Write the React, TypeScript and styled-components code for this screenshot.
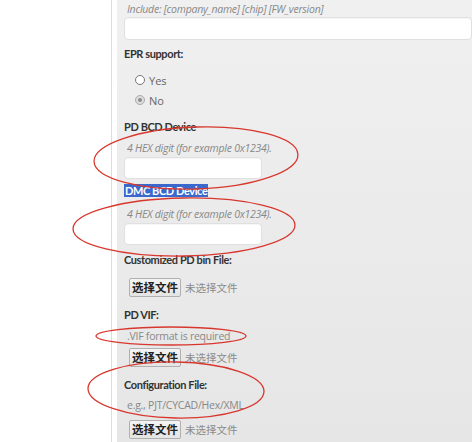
import styled, { createGlobalStyle } from "styled-components";

const Global = createGlobalStyle`
  html, body {
    margin: 0;
    padding: 0;
    background: #ffffff;
  }
  body {
    font-family: "Open Sans", "Noto Sans CJK SC", sans-serif;
    color: #333;
  }
`;

const Page = styled.div`
  position: relative;
  width: 474px;
  height: 442px;
  overflow: hidden;
  display: flex;
`;

const Blank = styled.div`
  width: 112px;
  border-right: 1px solid #dcdcdc;
`;

const Panel = styled.div`
  flex: 1;
  margin-left: 5px;
  margin-right: 2px;
  padding-left: 7px;
  background: linear-gradient(#f0f0f0, #e6e6e6);
  display: flex;
  flex-direction: column;
  align-items: flex-start;
`;

interface SpaceProps {
  $mt: number;
}

const Label = styled.div<SpaceProps>`
  margin-top: ${(p) => p.$mt}px;
  font-family: Lato, "Open Sans", sans-serif;
  font-size: 11px;
  line-height: 14px;
  font-weight: 700;
  color: #333;
  letter-spacing: -0.4px;
`;

const Selected = styled.span`
  background: #3a68cc;
  color: #fff;
  padding: 0 1px;
`;

const Hint = styled.div<SpaceProps & { $italic?: boolean }>`
  margin-top: ${(p) => p.$mt}px;
  padding-left: 3px;
  font-size: 10.5px;
  line-height: 14px;
  color: #888;
  font-style: ${(p) => (p.$italic ? "italic" : "normal")};
  letter-spacing: -0.25px;
`;

const TextInput = styled.input<SpaceProps & { $w: number; $h: number }>`
  margin-top: ${(p) => p.$mt}px;
  width: ${(p) => p.$w}px;
  height: ${(p) => p.$h}px;
  box-sizing: border-box;
  background: #fff;
  border: 1px solid #e0e0e0;
  border-radius: 4px;
  box-shadow: inset 0 1px 1px rgba(0, 0, 0, 0.04);
  outline: none;
`;

const Radios = styled.div`
  margin-top: 11px;
  padding-left: 11px;
  display: flex;
  flex-direction: column;
  gap: 4px;
`;

const RadioRow = styled.label`
  display: flex;
  align-items: center;
  gap: 4px;
  height: 16px;
  font-size: 11px;
  color: #666;
`;

const RadioDot = styled.span<{ $checked?: boolean }>`
  width: 8px;
  height: 8px;
  border-radius: 50%;
  border: 1px solid ${(p) => (p.$checked ? "#aaa" : "#777")};
  background: ${(p) => (p.$checked ? "#dedede" : "#fff")};
  display: flex;
  align-items: center;
  justify-content: center;
  &::after {
    content: "";
    display: ${(p) => (p.$checked ? "block" : "none")};
    width: 4px;
    height: 4px;
    border-radius: 50%;
    background: #8c8c8c;
  }
`;

const FileRow = styled.div<SpaceProps>`
  margin-top: ${(p) => p.$mt}px;
  padding-left: 5px;
  display: flex;
  align-items: center;
  gap: 4px;
`;

const FileButton = styled.button`
  height: 19px;
  width: 52px;
  padding: 0;
  box-sizing: border-box;
  background: linear-gradient(#f4f4f4, #e4e4e4);
  border: 1px solid #b0b0b0;
  border-radius: 2px;
  font-family: "Noto Sans CJK SC", sans-serif;
  font-size: 11.5px;
  font-weight: 700;
  color: #222;
  line-height: 17px;
`;

const NoFile = styled.span`
  font-family: "Noto Sans CJK SC", sans-serif;
  font-size: 10.5px;
  color: #8a8a8a;
`;

const Marks = styled.svg`
  position: absolute;
  left: 0;
  top: 0;
  pointer-events: none;
`;

function FilePicker({ mt }: { mt: number }) {
  return (
    <FileRow $mt={mt}>
      <FileButton>选择文件</FileButton>
      <NoFile>未选择文件</NoFile>
    </FileRow>
  );
}

export default function App() {
  return (
    <>
      <Global />
      <Page>
        <Blank />
        <Panel>
          <Hint $mt={2} $italic>
            Include: [company_name] [chip] [FW_version]
          </Hint>
          <TextInput $mt={1} $w={348} $h={23} />

          <Label $mt={7}>EPR support:</Label>
          <Radios>
            <RadioRow>
              <RadioDot />
              Yes
            </RadioRow>
            <RadioRow>
              <RadioDot $checked />
              No
            </RadioRow>
          </Radios>

          <Label $mt={12}>PD BCD Device</Label>
          <Hint $mt={7} $italic>
            4 HEX digit (for example 0x1234).
          </Hint>
          <TextInput $mt={2} $w={138} $h={22} />

          <Label $mt={5}>
            <Selected>DMC BCD Device</Selected>
          </Label>
          <Hint $mt={9} $italic>
            4 HEX digit (for example 0x1234).
          </Hint>
          <TextInput $mt={2} $w={138} $h={22} />

          <Label $mt={8}>Customized PD bin File:</Label>
          <FilePicker mt={11} />

          <Label $mt={11}>PD VIF:</Label>
          <Hint $mt={7}>.VIF format is required</Hint>
          <FilePicker mt={5} />

          <Label $mt={11}>Configuration File:</Label>
          <Hint $mt={6}>e.g., PJT/CYCAD/Hex/XML</Hint>
          <FilePicker mt={8} />
        </Panel>

        <Marks width="474" height="442" viewBox="0 0 474 442">
          <g fill="none" stroke="#d8372d" strokeWidth="1.3">
            <ellipse cx="196" cy="158" rx="102" ry="31" transform="rotate(-2 196 158)" />
            <ellipse cx="184" cy="227" rx="111" ry="29" transform="rotate(-1 184 227)" />
            <ellipse cx="171" cy="336" rx="75" ry="9" />
            <ellipse cx="176" cy="390" rx="88" ry="28" transform="rotate(1 176 390)" />
          </g>
        </Marks>
      </Page>
    </>
  );
}
